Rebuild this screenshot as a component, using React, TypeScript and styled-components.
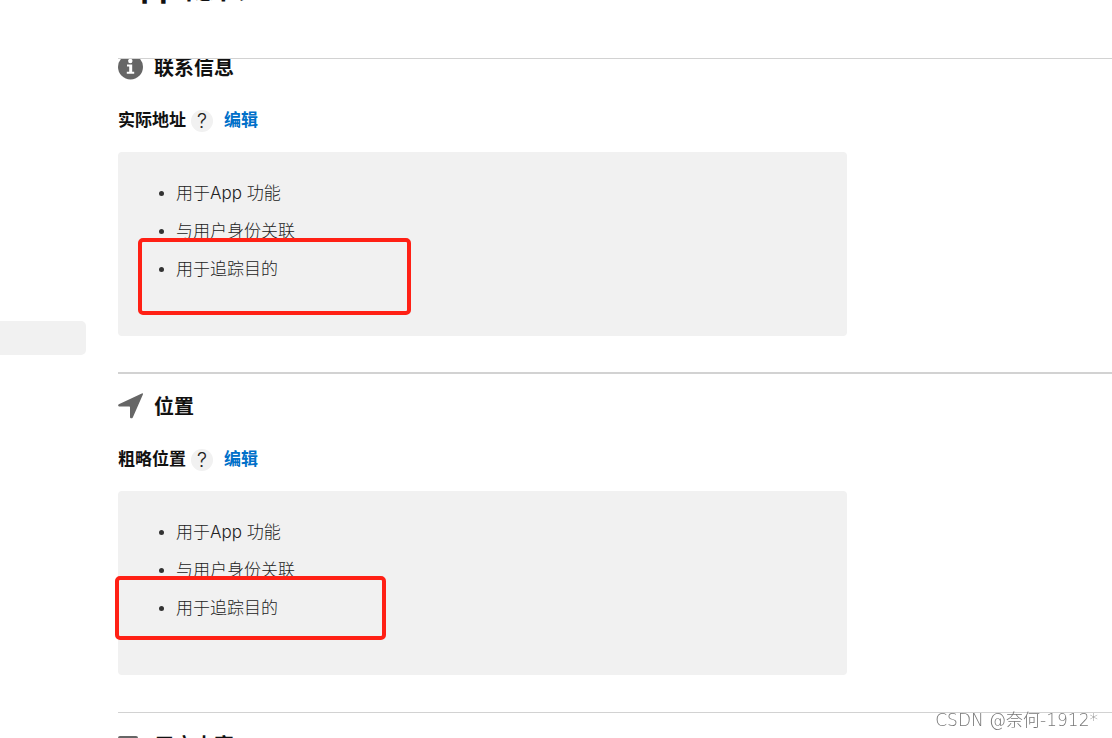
import React from 'react';
import styled, { createGlobalStyle } from 'styled-components';

const GlobalStyle = createGlobalStyle`
  *, *::before, *::after { box-sizing: border-box; }
  body {
    margin: 0;
    background: #fff;
    color: #111;
    font-family: Inter, "Noto Sans CJK SC", sans-serif;
    font-size: 17px;
    overflow: hidden;
  }
  h1, h2, h3, ul { margin: 0; padding: 0; }
`;

const Page = styled.div`
  display: flex;
  gap: 32px;
  height: 100vh;
  overflow: hidden;
`;

const Sidebar = styled.nav`
  flex: 0 0 86px;
  padding-top: 321px;
`;

const SidebarItem = styled.a`
  display: block;
  height: 34px;
  border-radius: 0 5px 5px 0;
  background: #f1f1f1;
`;

const Main = styled.main`
  flex: 1;
  min-width: 0;
  display: flex;
  flex-direction: column;
`;

const Header = styled.header`
  flex: none;
  display: flex;
  flex-direction: column;
  justify-content: flex-end;
  height: 59px;
  padding-bottom: 47px;
  border-bottom: 1px solid #d2d2d2;
`;

const PageTitle = styled.h1`
  font-size: 30px;
  line-height: 48px;
  font-weight: 700;
`;

/* Clips vertically, but lets the highlight frames reach into the left gutter. */
const Content = styled.div`
  flex: 1;
  min-height: 0;
  clip-path: inset(0 0 0 -32px);
`;

const Scrolled = styled.div`
  margin-top: -25px;
`;

const Section = styled.section<{ $strong?: boolean }>`
  margin-top: ${(p) => (p.$strong ? '-1px' : '0')};
  padding: 19px 0 37px;
  border-top: ${(p) => (p.$strong ? '2px' : '1px')} solid #d2d2d2;
`;

const SectionHead = styled.div`
  display: flex;
  align-items: center;
  gap: 10px;
  height: 26px;
  margin-bottom: 28px;

  svg { flex: none; display: block; }
`;

const SectionTitle = styled.h2`
  padding-top: 2px;
  font-size: 20px;
  line-height: 26px;
  font-weight: 700;
`;

const LabelRow = styled.div`
  display: flex;
  align-items: flex-start;
  height: 24px;
  margin-bottom: 20px;
`;

const Label = styled.h3`
  font-size: 17px;
  line-height: 24px;
  font-weight: 700;
`;

const HelpButton = styled.button`
  display: flex;
  align-items: center;
  justify-content: center;
  align-self: flex-end;
  width: 22px;
  height: 22px;
  margin: 0 11px 0 5px;
  padding: 0;
  border: 0;
  border-radius: 50%;
  background: #f1f1f1;
  color: #222;
  font: 300 20px/22px Inter, sans-serif;
`;

const EditLink = styled.a`
  color: #0070c9;
  line-height: 24px;
  font-weight: 700;
  text-decoration: none;
`;

const Panel = styled.div`
  position: relative;
  max-width: 729px;
  padding: 22px 20px 48px 41px;
  border-radius: 4px;
  background: #f1f1f1;
`;

const UsageList = styled.ul`
  color: #222;
  font-weight: 300;
  line-height: 38px;
  list-style: none;
`;

const UsageItem = styled.li`
  display: flex;
  align-items: center;
  gap: 12px;

  &::before {
    content: '';
    width: 5px;
    height: 5px;
    border-radius: 50%;
    background: #333;
  }
`;

const Highlight = styled.div<{ $x: number; $y: number; $w: number; $h: number }>`
  position: absolute;
  left: ${(p) => p.$x}px;
  top: ${(p) => p.$y}px;
  width: ${(p) => p.$w}px;
  height: ${(p) => p.$h}px;
  border: 4px solid #ff2015;
  border-radius: 5px;
  pointer-events: none;
`;

const Watermark = styled.div`
  position: fixed;
  right: 14px;
  bottom: 6px;
  color: #777;
  font-family: "DejaVu Sans Light", "DejaVu Sans", "Noto Sans CJK SC", sans-serif;
  font-size: 17px;
  line-height: 24px;
  font-weight: 200;
`;

const InfoIcon = () => (
  <svg width="26" height="26" viewBox="0 0 26 26" aria-hidden="true">
    <circle cx="12.5" cy="13" r="12.5" fill="#666" />
    <circle cx="12.3" cy="7" r="2.2" fill="#fff" />
    <path d="M9 10.5h5.2v7.3h2v2H8.8v-2h2.4v-5.3H9z" fill="#fff" />
  </svg>
);

const LocationIcon = () => (
  <svg width="26" height="26" viewBox="0 0 26 26" aria-hidden="true">
    <path
      d="M23.8 .4Q25.4 -.1 24.9 1.5L14.8 24.4Q13.4 26.2 12 24.4V14.2Q12 13.6 11.4 13.6H1Q-.6 12.6 .8 11.3Z"
      fill="#666"
    />
  </svg>
);

const ContentIcon = () => (
  <svg width="26" height="26" viewBox="0 0 26 26" aria-hidden="true">
    <rect x="0" y="4" width="20" height="20" rx="2" fill="#666" />
  </svg>
);

type DataBlockProps = {
  icon: React.ReactNode;
  title: string;
  label: string;
  strong?: boolean;
  mark: [number, number, number, number];
};

const uses = ['用于App 功能', '与用户身份关联', '用于追踪目的'];

const DataBlock = ({ icon, title, label, strong, mark }: DataBlockProps) => (
  <Section $strong={strong}>
    <SectionHead>
      {icon}
      <SectionTitle>{title}</SectionTitle>
    </SectionHead>
    <LabelRow>
      <Label>{label}</Label>
      <HelpButton type="button">?</HelpButton>
      <EditLink href="#edit">编辑</EditLink>
    </LabelRow>
    <Panel>
      <UsageList>
        {uses.map((u) => (
          <UsageItem key={u}>{u}</UsageItem>
        ))}
      </UsageList>
      <Highlight $x={mark[0]} $y={mark[1]} $w={mark[2]} $h={mark[3]} />
    </Panel>
  </Section>
);

export default function App() {
  return (
    <>
      <GlobalStyle />
      <Page>
        <Sidebar>
          <SidebarItem href="#privacy" />
        </Sidebar>
        <Main>
          <Header>
            <PageTitle>App 隐私</PageTitle>
          </Header>
          <Content>
            <Scrolled>
              <DataBlock
                icon={<InfoIcon />}
                title="联系信息"
                label="实际地址"
                mark={[20, 86, 273, 77]}
              />
              <DataBlock
                icon={<LocationIcon />}
                title="位置"
                label="粗略位置"
                strong
                mark={[-3, 85, 271, 64]}
              />
              <Section>
                <SectionHead>
                  <ContentIcon />
                  <SectionTitle>用户内容</SectionTitle>
                </SectionHead>
              </Section>
            </Scrolled>
          </Content>
        </Main>
      </Page>
      <Watermark>CSDN @奈何-1912*</Watermark>
    </>
  );
}
